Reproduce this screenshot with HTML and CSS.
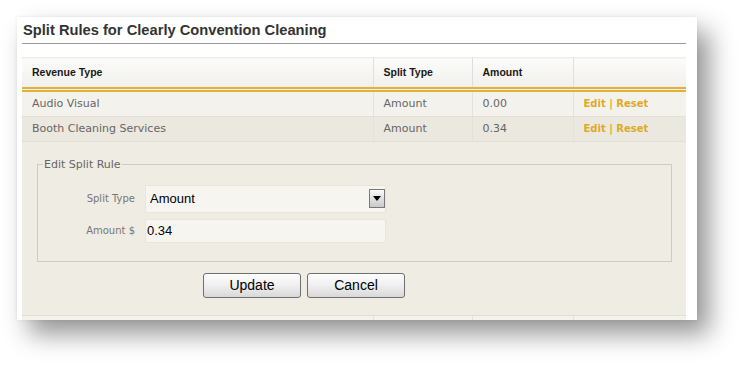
FILE: index.html
```html
<!DOCTYPE html>
<html lang="en">
<head>
    <meta charset="UTF-8">
    <meta name="viewport" content="width=device-width, initial-scale=1.0">
    <title>Split Rules</title>
    <link rel="stylesheet" href="styles.css">
</head>
<body>
    <div class="page">
        <div class="card">
            <h2>Split Rules for Clearly Convention Cleaning</h2>
            <table class="rules">
                <colgroup>
                    <col class="c-type">
                    <col class="c-split">
                    <col class="c-amount">
                    <col class="c-actions">
                </colgroup>
                <thead>
                    <tr>
                        <th>Revenue Type</th>
                        <th>Split Type</th>
                        <th>Amount</th>
                        <th></th>
                    </tr>
                </thead>
                <tbody>
                    <tr class="row">
                        <td>Audio Visual</td>
                        <td>Amount</td>
                        <td>0.00</td>
                        <td class="actions"><a href="#">Edit</a> | <a href="#">Reset</a></td>
                    </tr>
                    <tr class="row alt">
                        <td>Booth Cleaning Services</td>
                        <td>Amount</td>
                        <td>0.34</td>
                        <td class="actions"><a href="#">Edit</a> | <a href="#">Reset</a></td>
                    </tr>
                    <tr class="edit-row">
                        <td colspan="4">
                            <fieldset>
                                <legend>Edit Split Rule</legend>
                                <div class="fields">
                                    <label for="splitType">Split Type</label>
                                    <div class="select-wrap">
                                        <select id="splitType">
                                            <option>Amount</option>
                                            <option>Percent</option>
                                        </select>
                                        <span class="arrow">
                                            <svg width="8" height="5" viewBox="0 0 8 5"><path d="M0 0H8L4 5Z" fill="#000"/></svg>
                                        </span>
                                    </div>
                                    <label for="amount">Amount $</label>
                                    <input type="text" id="amount" value="0.34">
                                </div>
                            </fieldset>
                            <div class="buttons">
                                <button>Update</button>
                                <button>Cancel</button>
                            </div>
                        </td>
                    </tr>
                    <tr class="row">
                        <td></td>
                        <td></td>
                        <td></td>
                        <td></td>
                    </tr>
                </tbody>
            </table>
        </div>
    </div>
</body>
</html>
```

FILE: styles.css
```css
body {
    margin: 0;
    background: #fff;
    font-family: "DejaVu Sans", Verdana, sans-serif;
}
.page {
    min-height: 368px;
    box-sizing: border-box;
    padding: 17px 0 48px 17px;
}
.card {
    width: 664px;
    height: 303px;
    padding: 0 11px 0 5px;
    background: #fff;
    overflow: hidden;
    box-shadow: 12px 14px 24px rgba(0, 0, 0, 0.42), 0 0 3px rgba(0, 0, 0, 0.08);
}
h2 {
    margin: 0;
    padding: 4px 0 4px 1px;
    font-family: "Liberation Sans", Arial, sans-serif;
    font-size: 14.7px;
    line-height: 18px;
    color: #333;
    border-bottom: 1px solid #9a9a9a;
}
.rules {
    width: 664px;
    margin-top: 13px;
    border-collapse: collapse;
    table-layout: fixed;
}
.c-type { width: 351px; }
.c-split { width: 99px; }
.c-amount { width: 101px; }
.c-actions { width: 113px; }
th {
    height: 32px;
    padding: 0 9px 0 10px;
    box-sizing: border-box;
    text-align: left;
    font-family: "Liberation Sans", Arial, sans-serif;
    font-size: 10.5px;
    color: #1a1a14;
    background: linear-gradient(#e9e9e7, #fbfbfa 8%, #f1f0ec);
    border-left: 1px solid #e0dfdb;
    border-bottom: 5px double #e2b13a;
}
th:first-child, .row td:first-child {
    border-left: none;
}
.row td {
    height: 24px;
    padding: 0 9px 0 10px;
    font-size: 11px;
    color: #666;
    background: #f4f2ed;
    border-left: 1px solid #e4e1d8;
    border-bottom: 1px solid #e2dfd6;
}
.row.alt td {
    background: #ebe8df;
}
.actions {
    font-weight: bold;
    font-size: 10px !important;
    color: #e0a828 !important;
}
.actions a {
    color: #e0a828;
    text-decoration: none;
}
.edit-row td {
    padding: 16px 14px 17px 15px;
    background: #efece3;
    border-bottom: 1px solid #e0ddd4;
}
fieldset {
    margin: 0;
    padding: 13px 0 18px 0;
    border: 1px solid #cdcbc4;
}
legend {
    padding: 0 1px;
    margin-left: 5px;
    font-size: 11px;
    line-height: 14px;
    color: #666;
}
.fields {
    display: grid;
    grid-template-columns: 97px 241px;
    column-gap: 10px;
    row-gap: 6px;
    align-items: center;
}
label {
    text-align: right;
    font-size: 10px;
    color: #777;
}
.select-wrap {
    position: relative;
    height: 28px;
}
select, input {
    width: 100%;
    box-sizing: border-box;
    font-family: "Liberation Sans", Arial, sans-serif;
    font-size: 13px;
    color: #000;
    background: #f7f5f0;
    border: 1px solid #e8e5dc;
    outline: none;
}
select {
    height: 28px;
    padding: 0 0 0 4px;
    appearance: none;
    -webkit-appearance: none;
    border-radius: 0;
}
.arrow {
    position: absolute;
    right: 1px;
    top: 4px;
    width: 14px;
    height: 17px;
    display: flex;
    align-items: center;
    justify-content: center;
    border: 1px solid #777;
    background: linear-gradient(#fafafa, #c9c9c9);
    pointer-events: none;
}
input {
    height: 24px;
    padding: 0 0 0 1px;
}
.buttons {
    display: flex;
    gap: 6px;
    margin-top: 11px;
    padding-left: 166px;
}
button {
    width: 98px;
    height: 25px;
    font-family: "Liberation Sans", Arial, sans-serif;
    font-size: 14px;
    color: #000;
    background: linear-gradient(#fdfdfd, #f1f1f1 45%, #d9d9d9);
    border: 1px solid #6f6f6f;
    border-radius: 3px;
    cursor: pointer;
}
```
